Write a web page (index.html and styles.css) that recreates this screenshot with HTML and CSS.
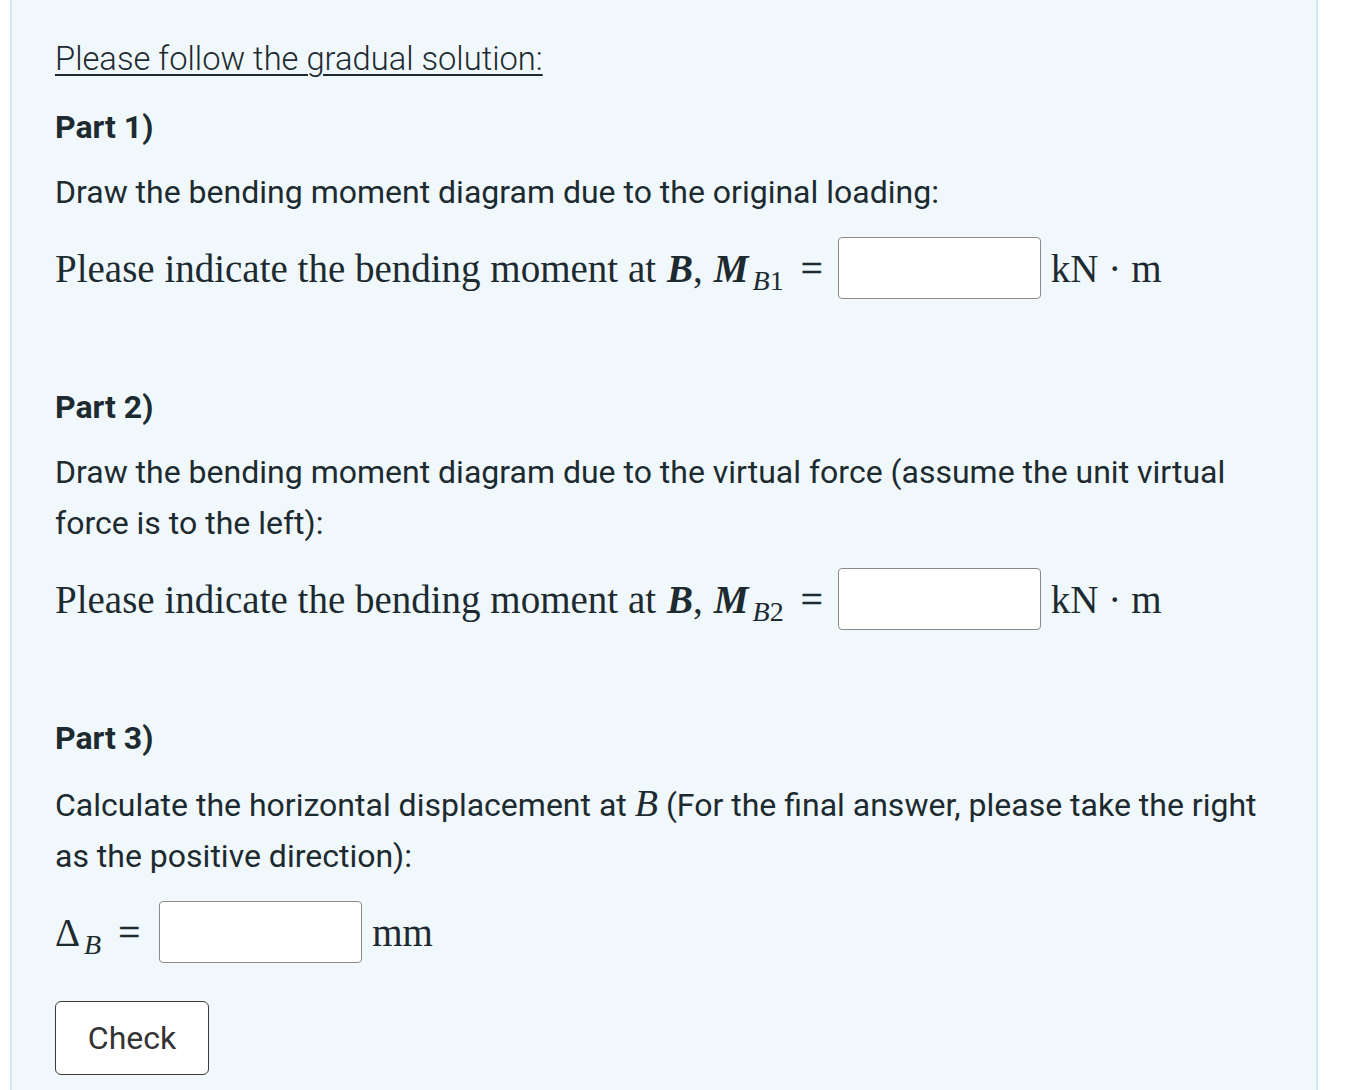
FILE: index.html
```html
<!DOCTYPE html>
<html>
<head>
<meta charset="utf-8">
<link rel="stylesheet" href="styles.css">
</head>
<body>
<div class="panel">
  <p class="intro"><u>Please follow the gradual solution:</u></p>

  <p class="part">Part 1)</p>
  <p class="text">Draw the bending moment diagram due to the original loading:</p>
  <div class="eq-row">
    <span class="math">Please indicate the bending moment at <b class="bi">B</b>, <b class="bi">M</b><sub class="sub"><i>B</i>1</sub><span class="eq">=</span></span>
    <input class="box" type="text">
    <span class="math unit">kN<span class="dot">·</span>m</span>
  </div>

  <p class="part gap-top">Part 2)</p>
  <p class="text">Draw the bending moment diagram due to the virtual force (assume the unit virtual force is to the left):</p>
  <div class="eq-row">
    <span class="math">Please indicate the bending moment at <b class="bi">B</b>, <b class="bi">M</b><sub class="sub"><i>B</i>2</sub><span class="eq">=</span></span>
    <input class="box" type="text">
    <span class="math unit">kN<span class="dot">·</span>m</span>
  </div>

  <p class="part gap-top">Part 3)</p>
  <p class="text">Calculate the horizontal displacement at <i class="ib">B</i> (For the final answer, please take the right as the positive direction):</p>
  <div class="eq-row">
    <span class="math">Δ<sub class="sub sub-d"><i>B</i></sub><span class="eq eq-d">=</span></span>
    <input class="box" type="text">
    <span class="math unit">mm</span>
  </div>

  <button class="check" type="button">Check</button>
</div>
</body>
</html>
```

FILE: styles.css
```css
html, body {
  margin: 0;
  padding: 0;
  background: #ffffff;
}

.panel {
  margin-left: 10px;
  width: 1308px;
  min-height: 1090px;
  box-sizing: border-box;
  background: #f0f8fc;
  border-left: 2px solid #d3e9f0;
  border-right: 2px solid #d3e9f0;
  padding: 34px 40px 30px 43px;
  font-family: Roboto, "Noto Sans", sans-serif;
  font-size: 32px;
  color: #1d2a30;
}

p {
  margin: 0;
  line-height: 51px;
}

.intro {
  font-weight: 300;
  font-size: 32.7px;
  margin-bottom: 17px;
}

.intro u {
  text-decoration-thickness: 2px;
  text-underline-offset: 4px;
}

.part {
  font-weight: 700;
  margin-bottom: 14px;
}

.gap-top {
  margin-top: 83px;
}

.text {
  margin-bottom: 19px;
}

.eq-row {
  display: flex;
  align-items: center;
  height: 62px;
}

.math {
  font-family: "Liberation Serif", "Times New Roman", serif;
  font-size: 39px;
  white-space: nowrap;
  display: inline-flex;
  align-items: baseline;
}

.bi {
  font-style: italic;
  font-weight: 700;
  margin: 0 0 0 11px;
}

.bi + .sub {
  margin-left: 4px;
}

.sub {
  font-size: 28px;
  position: relative;
  top: 8px;
  vertical-align: baseline;
}

.sub-d {
  margin-left: 4px;
}

.eq {
  margin: 0 15px 0 17px;
  -webkit-text-stroke: 0.4px #1d2a30;
}

.eq-d {
  margin: 0 19px 0 17px;
}

.box {
  width: 203px;
  height: 62px;
  box-sizing: border-box;
  border: 1px solid #8a8a8a;
  border-radius: 4px;
  background: #ffffff;
  margin: 0;
  padding: 0;
}

.unit {
  margin-left: 10px;
}

.dot {
  margin: 0 10px;
}

.ib {
  font-family: "Liberation Serif", "Times New Roman", serif;
  font-size: 38px;
  font-style: italic;
}

.check {
  display: block;
  margin-top: 38px;
  width: 154px;
  height: 74px;
  background: #ffffff;
  border: 1px solid #3a3a3a;
  border-radius: 6px;
  font-family: Roboto, "Noto Sans", sans-serif;
  font-size: 32px;
  color: #333333;
  padding: 0;
}
```
